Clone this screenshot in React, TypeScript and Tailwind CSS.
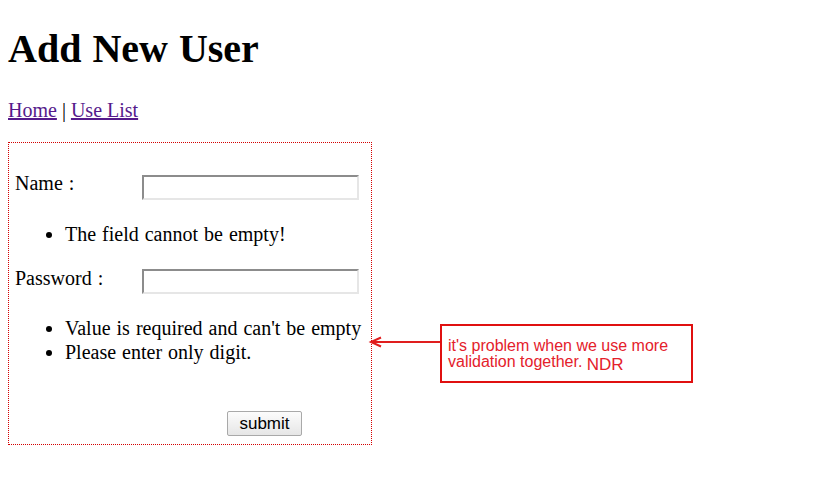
import React from 'react';

export default function App() {
  return (
    <div className="relative min-h-[489px] bg-white px-2 pt-[26px] text-black font-['Liberation_Serif',serif] [word-spacing:1px]">
      {/* Heading */}
      <h1 className="text-[40px] leading-[46px] font-bold">Add New User</h1>

      {/* Links */}
      <p className="mt-[27px] text-[20px] leading-[23px] [word-spacing:0px]">
        <a href="#" className="text-[#551a8b] underline">Home</a>
        {' | '}
        <a href="#" className="text-[#551a8b] underline">Use List</a>
      </p>

      {/* Form box */}
      <form className="mt-[20px] w-[364px] border border-dotted border-[#d40000] pl-[6px] pr-[7px] pt-[29px] pb-[8px] text-[20px] leading-[23px]">
        <div className="flex items-start">
          <label className="w-[127px]">Name :</label>
          <input
            type="text"
            className="mt-[3px] h-[25px] w-[217px] border-2 border-t-[#8c8c8c] border-l-[#8c8c8c] border-b-[#e6e6e6] border-r-[#e6e6e6] bg-white outline-none"
          />
        </div>
        <ul className="mt-[23px] ml-[10px] list-disc pl-[40px]">
          <li>The field cannot be empty!</li>
        </ul>

        <div className="mt-[21px] flex items-start">
          <label className="w-[127px]">Password :</label>
          <input
            type="password"
            className="mt-[2px] h-[25px] w-[217px] border-2 border-t-[#8c8c8c] border-l-[#8c8c8c] border-b-[#e6e6e6] border-r-[#e6e6e6] bg-white outline-none"
          />
        </div>
        <ul className="mt-[22px] ml-[10px] list-disc pl-[40px] leading-[24px]">
          <li className="whitespace-nowrap">Value is required and can't be empty</li>
          <li>Please enter only digit.</li>
        </ul>

        <div className="mt-[47px] flex">
          <button
            type="button"
            className="ml-[212px] h-[25px] w-[75px] rounded-[2px] border border-[#a9a9a9] bg-gradient-to-b from-[#fcfcfc] to-[#e6e6e6] text-[17px] leading-[20px] font-['Liberation_Sans',sans-serif] [word-spacing:0px]"
          >
            submit
          </button>
        </div>
      </form>

      {/* Annotation arrow */}
      <svg className="absolute left-[368px] top-[334px]" width="74" height="16" viewBox="0 0 74 16">
        <path d="M3 8 H73" stroke="#e01e1e" strokeWidth="2" fill="none" />
        <path d="M13 3.5 L3 8 L13 12.5" stroke="#e01e1e" strokeWidth="2" fill="none" />
      </svg>

      {/* Annotation note */}
      <div className="absolute left-[440px] top-[324px] h-[59px] w-[253px] border-2 border-[#e01010] pl-[6px] pt-[12px] text-[16px] leading-[16px] text-[#e4212b] font-['Liberation_Sans',sans-serif] [word-spacing:0px]">
        it's problem when we use more validation together.{' '}
        <span className="text-[17px] align-[-3px]">NDR</span>
      </div>
    </div>
  );
}
